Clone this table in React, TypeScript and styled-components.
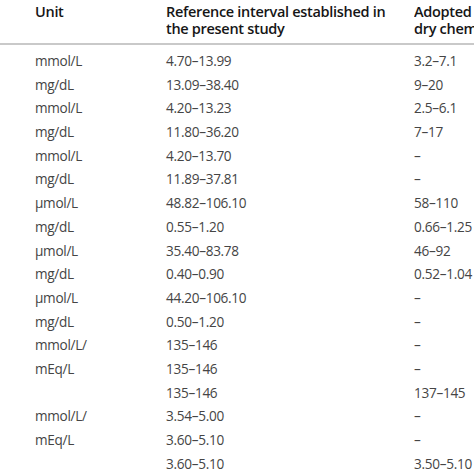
import styled, { createGlobalStyle } from "styled-components";

const GlobalStyle = createGlobalStyle`
  html, body {
    margin: 0;
    padding: 0;
    background: #fff;
    overflow: hidden;
  }
`;

const Sheet = styled.div`
  width: 474px;
  height: 474px;
  overflow: hidden;
  font-family: "Open Sans", "Noto Sans", sans-serif;
`;

const Grid = styled.div`
  display: grid;
  grid-template-columns: 131px 248px 300px;
  padding-left: 35px;
  width: 714px;
`;

const HeadCell = styled.div`
  font-size: 14.5px;
  font-weight: 600;
  line-height: 17px;
  color: #161616;
  letter-spacing: -0.3px;
  padding-top: 3px;
  height: 40px;
  white-space: nowrap;
  overflow: hidden;
`;

const Rule = styled.div`
  grid-column: 1 / -1;
  margin-left: -35px;
  height: 2px;
  background: #c9c9c9;
  margin-bottom: 4px;
`;

const Cell = styled.div`
  font-size: 13.6px;
  line-height: 23.7px;
  height: 23.7px;
  color: #454545;
  letter-spacing: -0.3px;
  white-space: nowrap;
`;

type Row = [string, string, string];

const rows: Row[] = [
  ["mmol/L", "4.70–13.99", "3.2–7.1"],
  ["mg/dL", "13.09–38.40", "9–20"],
  ["mmol/L", "4.20–13.23", "2.5–6.1"],
  ["mg/dL", "11.80–36.20", "7–17"],
  ["mmol/L", "4.20–13.70", "–"],
  ["mg/dL", "11.89–37.81", "–"],
  ["μmol/L", "48.82–106.10", "58–110"],
  ["mg/dL", "0.55–1.20", "0.66–1.25"],
  ["μmol/L", "35.40–83.78", "46–92"],
  ["mg/dL", "0.40–0.90", "0.52–1.04"],
  ["μmol/L", "44.20–106.10", "–"],
  ["mg/dL", "0.50–1.20", "–"],
  ["mmol/L/", "135–146", "–"],
  ["mEq/L", "135–146", "–"],
  ["", "135–146", "137–145"],
  ["mmol/L/", "3.54–5.00", "–"],
  ["mEq/L", "3.60–5.10", "–"],
  ["", "3.60–5.10", "3.50–5.10"],
];

export default function App() {
  return (
    <Sheet>
      <GlobalStyle />
      <Grid>
        <HeadCell>Unit</HeadCell>
        <HeadCell>
          Reference interval established in
          <br />
          the present study
        </HeadCell>
        <HeadCell>
          Adopted reference interval of
          <br />
          dry chemistry analyzer
        </HeadCell>
        <Rule />
        {rows.map((r, i) => (
          <>
            <Cell key={`u${i}`}>{r[0]}</Cell>
            <Cell key={`a${i}`}>{r[1]}</Cell>
            <Cell key={`b${i}`}>{r[2]}</Cell>
          </>
        ))}
      </Grid>
    </Sheet>
  );
}
